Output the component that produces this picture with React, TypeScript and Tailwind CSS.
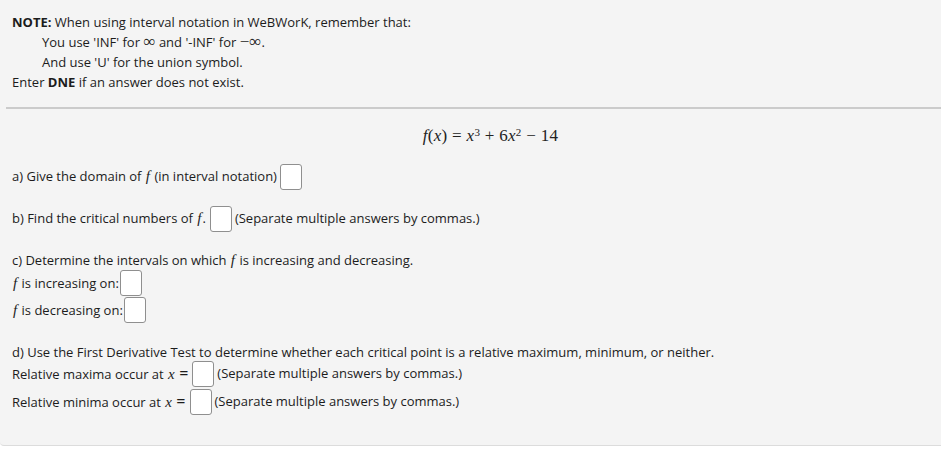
import React from 'react'

const Box = () => (
  <span className="inline-block w-[22px] h-[26px] align-middle bg-white border border-[#8f8f8f] rounded-[3px] mx-[1px]" />
)

const M = ({ children }: { children: React.ReactNode }) => (
  <span className="italic text-[15px] px-[1px]" style={{ fontFamily: '"Liberation Serif", serif' }}>
    {children}
  </span>
)

export default function App() {
  return (
    <div className="min-h-screen bg-white text-[#1c1c1c] text-[13px]" style={{ fontFamily: '"Open Sans", sans-serif' }}>
      <div className="bg-[#f4f4f4] border-b border-[#dcdcdc] rounded-bl-[4px] h-[446px]">
        <div className="px-3 pt-[12px] leading-[20px]">
          <div>
            <b>NOTE:</b> When using interval notation in WeBWorK, remember that:
          </div>
          <div className="pl-[30px]">
            You use 'INF' for <span className="text-[17px]" style={{ fontFamily: '"Liberation Serif", serif' }}>∞</span> and '-INF' for{' '}
            <span className="text-[17px]" style={{ fontFamily: '"Liberation Serif", serif' }}>−∞</span>.
          </div>
          <div className="pl-[30px]">And use 'U' for the union symbol.</div>
          <div>
            Enter <b>DNE</b> if an answer does not exist.
          </div>
        </div>

        <div className="ml-[6px] mt-[15px] border-t-2 border-[#cbcbcb]" />

        <div className="px-3">
          <div className="pt-[14px] pl-[40px] text-center text-[17px] text-[#222] tracking-[0.3px]" style={{ fontFamily: '"Liberation Serif", serif' }}>
            <i>f</i>(<i>x</i>) = <i>x</i>
            <sup className="text-[11px]">3</sup> + 6<i>x</i>
            <sup className="text-[11px]">2</sup> − 14
          </div>

          <div className="mt-[15px] flex items-center">
            <span>
              a) Give the domain of <M>f</M> (in interval notation)
            </span>
            <span className="ml-[2px]">
              <Box />
            </span>
          </div>

          <div className="mt-[16px] flex items-center">
            <span>
              b) Find the critical numbers of <M>f</M>.
            </span>
            <span className="ml-[3px]">
              <Box />
            </span>
            <span className="ml-[2px]">(Separate multiple answers by commas.)</span>
          </div>

          <div className="mt-[17px]">
            c) Determine the intervals on which <M>f</M> is increasing and decreasing.
          </div>
          <div className="flex items-center mt-[-1px]">
            <span>
              <M>f</M> is increasing on:
            </span>
            <Box />
          </div>
          <div className="flex items-center mt-[1px]">
            <span>
              <M>f</M> is decreasing on:
            </span>
            <Box />
          </div>

          <div className="mt-[20px]">
            d) Use the First Derivative Test to determine whether each critical point is a relative maximum, minimum, or neither.
          </div>
          <div className="flex items-center mt-[-2px]">
            <span>
              Relative maxima occur at <M>x</M> <span className="text-[16px]">=</span>
            </span>
            <span className="ml-[3px]">
              <Box />
            </span>
            <span className="ml-[2px]">(Separate multiple answers by commas.)</span>
          </div>
          <div className="flex items-center mt-[2px]">
            <span>
              Relative minima occur at <M>x</M> <span className="text-[16px]">=</span>
            </span>
            <span className="ml-[3px]">
              <Box />
            </span>
            <span className="ml-[2px]">(Separate multiple answers by commas.)</span>
          </div>
        </div>
      </div>
    </div>
  )
}
